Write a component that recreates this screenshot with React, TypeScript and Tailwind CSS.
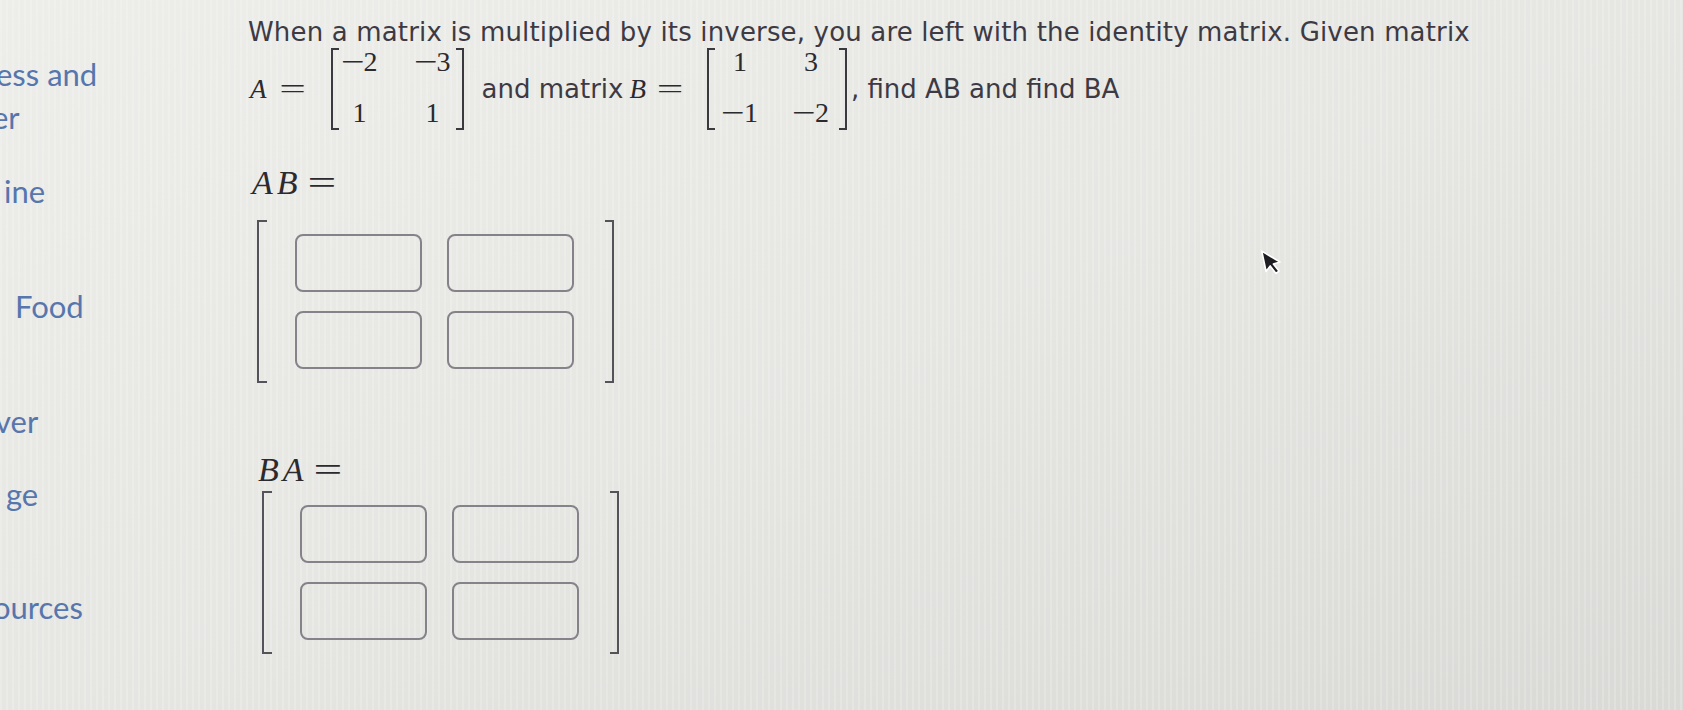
import React from "react";

function Neg({ d }: { d: string }) {
  return (
    <span className="whitespace-nowrap">
      <span className="inline-block w-[22px] text-center scale-x-150">−</span>
      {d}
    </span>
  );
}

function InputBox() {
  return <div className="w-[127px] h-[58px] rounded-[8px] border-2 border-[#85828a]" />;
}

function BigMatrix({ className }: { className: string }) {
  return (
    <div className={className}>
      <div className="w-[10px] border-l-2 border-y-2 border-[#55535a]" />
      <div className="self-center ml-[28px] mr-[31px] grid grid-cols-[127px_127px] gap-x-[25px] gap-y-[19px]">
        <InputBox />
        <InputBox />
        <InputBox />
        <InputBox />
      </div>
      <div className="w-[9px] border-r-2 border-y-2 border-[#55535a]" />
    </div>
  );
}

export default function App() {
  return (
    <div className="relative w-[1683px] h-[710px] overflow-hidden bg-gradient-to-br from-[#ededea] via-[#e6e6e3] to-[#d9d9d6]">
      <div className="absolute inset-0 bg-[repeating-linear-gradient(90deg,rgba(255,255,255,0.18)_0px,rgba(255,255,255,0.18)_2px,transparent_2px,transparent_6px)]" />
      <div className="relative flex h-full">
        {/* sidebar (clipped) */}
        <div className="w-[248px] shrink-0 overflow-hidden pt-[53px] font-['Lato',sans-serif] text-[31px] leading-[43px] text-[#5676ad] whitespace-nowrap">
          <div className="-ml-[4px]">ess and</div>
          <div className="-ml-[8px]">er</div>
          <div className="mt-[31px] ml-[4px]">ine</div>
          <div className="mt-[72px] ml-[15px]">Food</div>
          <div className="mt-[72px] -ml-[5px]">ver</div>
          <div className="mt-[30px] ml-[6px]">ge</div>
          <div className="mt-[70px] -ml-[7px]">ources</div>
        </div>

        {/* main question */}
        <div className="flex-1 pt-[17px]">
          <div className="font-['DejaVu_Sans',sans-serif] text-[26px] leading-[31px] tracking-[0.16px] text-[#3d3a44] whitespace-nowrap">
            When a matrix is multiplied by its inverse, you are left with the identity matrix. Given matrix
          </div>
          <div className="flex items-center h-[82px] whitespace-nowrap text-[#2b2a2e]">
            <span className="ml-[2px] font-['Liberation_Serif',serif] italic text-[27px] tracking-[3px]">A</span>
            <span className="ml-[10px] inline-block w-[25px] text-center font-['Liberation_Serif',serif] text-[27px] scale-x-175">=</span>
            <span className="ml-[26px] inline-flex items-stretch h-[82px] font-['Liberation_Serif',serif] text-[28px]">
              <span className="w-[8px] border-l-2 border-y-2 border-[#3a393e]" />
              <span className="ml-[1px] mr-[3px] grid grid-cols-[40px_40px] gap-x-[33px] gap-y-[20px] leading-[28px] text-center">
                <Neg d="2" />
                <Neg d="3" />
                <span>1</span>
                <span>1</span>
              </span>
              <span className="w-[8px] border-r-2 border-y-2 border-[#3a393e]" />
            </span>
            <span className="ml-[18px] font-['DejaVu_Sans',sans-serif] text-[26px] text-[#3d3a44]">and matrix</span>
            <span className="ml-[6px] font-['Liberation_Serif',serif] italic text-[27px] tracking-[3px]">B</span>
            <span className="ml-[8px] inline-block w-[26px] text-center font-['Liberation_Serif',serif] text-[27px] scale-x-175">=</span>
            <span className="ml-[24px] inline-flex items-stretch h-[82px] font-['Liberation_Serif',serif] text-[28px]">
              <span className="w-[8px] border-l-2 border-y-2 border-[#3a393e]" />
              <span className="ml-[5px] mr-[8px] grid grid-cols-[40px_40px] gap-x-[31px] gap-y-[20px] leading-[28px] text-center">
                <span>1</span>
                <span>3</span>
                <Neg d="1" />
                <Neg d="2" />
              </span>
              <span className="w-[8px] border-r-2 border-y-2 border-[#3a393e]" />
            </span>
            <span className="ml-[4px] font-['DejaVu_Sans',sans-serif] text-[26px] text-[#3d3a44]">, find AB and find BA</span>
          </div>

          {/* AB = */}
          <div className="mt-[35px] ml-[4px] h-[36px] leading-[36px] font-['Liberation_Serif',serif] text-[34px] text-[#2b2a2e] whitespace-nowrap">
            <span className="italic tracking-[4px]">AB</span>
            <span className="ml-[8px] inline-block w-[24px] text-center scale-x-150">=</span>
          </div>
          <BigMatrix className="mt-[19px] ml-[9px] flex h-[163px]" />

          {/* BA = */}
          <div className="mt-[69px] ml-[10px] h-[36px] leading-[36px] font-['Liberation_Serif',serif] text-[34px] text-[#2b2a2e] whitespace-nowrap">
            <span className="italic tracking-[4px]">BA</span>
            <span className="ml-[8px] inline-block w-[24px] text-center scale-x-150">=</span>
          </div>
          <BigMatrix className="mt-[3px] ml-[14px] flex h-[163px]" />
        </div>
      </div>

      {/* mouse cursor */}
      <svg
        className="absolute left-[1259px] top-[250px]"
        width="24"
        height="30"
        viewBox="0 0 20 26"
      >
        <path
          d="M2 1 L2 19 L6.5 15 L10 22.5 L13 21 L9.5 14 L15.5 13.5 Z"
          fill="#1e1e22"
          stroke="#ffffff"
          strokeWidth="1.4"
          strokeLinejoin="round"
          transform="rotate(-12 2 1)"
        />
      </svg>
    </div>
  );
}
